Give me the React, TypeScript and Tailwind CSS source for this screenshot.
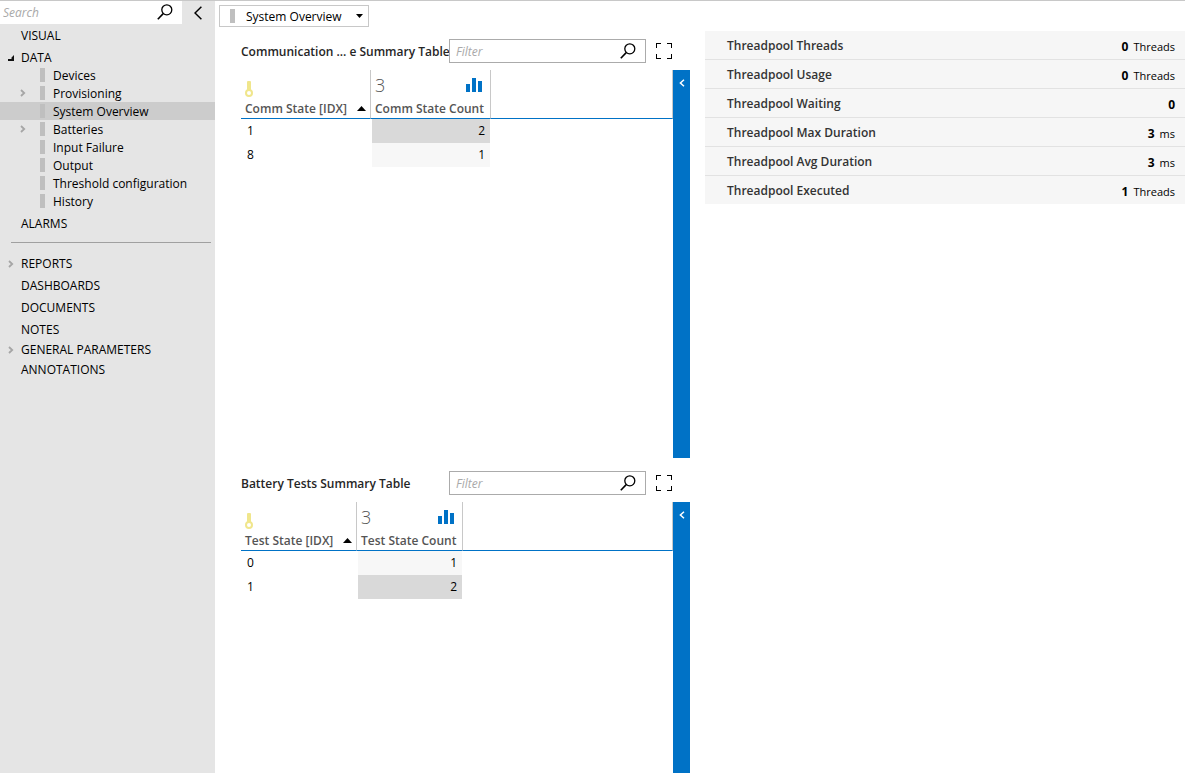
import clsx from "clsx";
import type { ReactElement } from "react";

type NavItem = { label: string; expandable?: boolean; active?: boolean };

const dataPages: NavItem[] = [
    { label: "Devices" },
    { label: "Provisioning", expandable: true },
    { label: "System Overview", active: true },
    { label: "Batteries", expandable: true },
    { label: "Input Failure" },
    { label: "Output" },
    { label: "Threshold configuration" },
    { label: "History" },
];

const threadpool = [
    { name: "Threadpool Threads", value: 0, unit: "Threads" },
    { name: "Threadpool Usage", value: 0, unit: "Threads" },
    { name: "Threadpool Waiting", value: 0, unit: "" },
    { name: "Threadpool Max Duration", value: 3, unit: "ms" },
    { name: "Threadpool Avg Duration", value: 3, unit: "ms" },
    { name: "Threadpool Executed", value: 1, unit: "Threads" },
];

function SearchIcon(): ReactElement {
    return (
        <svg width="16" height="16" viewBox="0 0 16 16" fill="none" stroke="#000" aria-hidden="true">
            <circle cx="9.8" cy="5.8" r="5" strokeWidth="1.3" />
            <path d="M6.2 9.6L0.8 15.2" strokeWidth="1.6" />
        </svg>
    );
}

function Expander(): ReactElement {
    return (
        <svg width="6" height="8" viewBox="0 0 6 8" fill="none" stroke="#a6a6a6" strokeWidth="1.8" aria-hidden="true">
            <path d="M1 1L4.2 4L1 7" />
        </svg>
    );
}

function NavLink({ label, expandable, expanded, className }: { label: string; expandable?: boolean; expanded?: boolean; className: string }): ReactElement {
    return (
        <a href="#" className={clsx("flex items-center", className)}>
            <span className="flex w-[21px] pl-2">
                {expandable && <Expander />}
                {expanded && (
                    <svg width="6" height="6" viewBox="0 0 6 6" aria-hidden="true">
                        <path d="M6 0V6H0V4H3.5V2.5L6 0Z" fill="#111" />
                    </svg>
                )}
            </span>
            {label}
        </a>
    );
}

function Sidebar(): ReactElement {
    return (
        <aside className="w-[215px] shrink-0 bg-[#e5e5e5]">
            <div className="flex h-[23px]">
                <label className="flex flex-1 items-center bg-white pr-[9px] pb-0.5">
                    <input type="text" aria-label="Search" placeholder="Search" className="w-0 flex-1 px-[3px] pt-0.5 italic outline-none placeholder:text-[#a9a9a9]" />
                    <SearchIcon />
                </label>
                <button type="button" aria-label="Collapse sidebar" className="flex w-[33px] items-center justify-center pr-0.5">
                    <svg width="8" height="14" viewBox="0 0 8 14" fill="none" stroke="#000" strokeWidth="1.5">
                        <path d="M7.4 0.8L1 7L7.4 13.2" />
                    </svg>
                </button>
            </div>

            <nav>
                <NavLink label="VISUAL" className="h-[22px] pt-0.5" />
                <NavLink label="DATA" expanded className="h-[22px] pt-0.5" />
                <ul className="-mt-0.5 pb-0.5">
                    {dataPages.map((page) => (
                        <li key={page.label}>
                            <a href="#" className={clsx("flex h-[18px] items-center", page.active && "bg-[#cccccc]")}>
                                <span className="w-10 pl-5">{page.expandable && <Expander />}</span>
                                <span className="mr-2 h-3.5 w-[5px] bg-[#bfbfbf]" />
                                <span className="pt-0.5">{page.label}</span>
                            </a>
                        </li>
                    ))}
                </ul>
                <NavLink label="ALARMS" className="h-[22px] pt-0.5" />
                <hr className="mt-2 mr-1 mb-[9px] ml-[11px] border-[#a0a0a0]" />
                <NavLink label="REPORTS" expandable className="h-[22px] pt-0.5" />
                <NavLink label="DASHBOARDS" className="h-[22px] pt-0.5" />
                <NavLink label="DOCUMENTS" className="h-[22px] pt-0.5" />
                <NavLink label="NOTES" className="h-[22px] pt-0.5" />
                <NavLink label="GENERAL PARAMETERS" expandable className="h-5" />
                <NavLink label="ANNOTATIONS" className="h-5" />
            </nav>
        </aside>
    );
}

type SummaryProps = {
    title: string;
    columns: [string, string];
    widths: [string, string];
    rows: { state: number; count: number; high?: boolean }[];
    className: string;
};

function SummaryTable({ title, columns, widths, rows, className }: SummaryProps): ReactElement {
    return (
        <section className={clsx("flex flex-col gap-[7px]", className)}>
            { /* Title with filter box */ }
            <div className="flex h-6 items-center pr-[18px]">
                <h2 className="w-52 pt-0.5 font-semibold whitespace-nowrap text-[#262626]">{title}</h2>
                <label className="mr-2.5 flex h-6 flex-1 items-center border border-[#ababab] pr-[9px]">
                    <input type="text" aria-label={"Filter " + title} placeholder="Filter" className="w-0 flex-1 px-1.5 pt-0.5 italic outline-none placeholder:text-[#a9a9a9]" />
                    <SearchIcon />
                </label>
                <button type="button" aria-label="Full screen">
                    <svg width="16" height="16" viewBox="0 0 16 16" fill="none" stroke="#000" shapeRendering="crispEdges">
                        <path d="M0.5 5V0.5H5M11 0.5H15.5V5M15.5 11V15.5H11M5 15.5H0.5V11" />
                    </svg>
                </button>
            </div>

            <div className="flex flex-1">
                <div className="flex-1">
                    <table className="w-full table-fixed border-separate border-spacing-0 text-left">
                        <thead>
                            <tr className="h-[49px] align-bottom text-[#555]">
                                <th scope="col" className={clsx("border-r border-b border-r-[#c8c8c8] border-b-[#0072c6] pr-1 pl-1 font-semibold", widths[0])}>
                                    <svg className="mb-[3px]" width="8" height="16" viewBox="0 0 8 16" aria-hidden="true">
                                        <rect x="2" y="0" width="4" height="10" rx="1" fill="#f0e68c" />
                                        <circle cx="4" cy="12" r="3" fill="#fff" stroke="#f0e68c" strokeWidth="2" />
                                    </svg>
                                    <span className="flex h-[18px] items-center justify-between whitespace-nowrap">
                                        {columns[0]}
                                        <svg className="mb-0.5" width="9" height="5" viewBox="0 0 9 5" aria-hidden="true">
                                            <path d="M0 5L4.5 0L9 5Z" fill="#000" />
                                        </svg>
                                    </span>
                                </th>
                                <th scope="col" className={clsx("border-r border-b border-r-[#c8c8c8] border-b-[#0072c6] pl-1 font-semibold", widths[1])}>
                                    <span className="mb-1 flex h-[22px] items-center justify-between pr-2 text-lg font-light">
                                        3
                                        <svg width="16" height="14" viewBox="0 0 16 14" fill="#0072c6" aria-hidden="true">
                                            <path d="M0 6H4V14H0ZM6 0H10V14H6ZM12 3H16V14H12Z" />
                                        </svg>
                                    </span>
                                    <span className="flex h-[18px] items-center whitespace-nowrap">{columns[1]}</span>
                                </th>
                                <td className="border-r border-b border-r-[#c8c8c8] border-b-[#0072c6]" />
                            </tr>
                        </thead>
                        <tbody>
                            {rows.map((row) => (
                                <tr key={row.state} className="h-6">
                                    <td className="pl-1.5">{row.state}</td>
                                    <td className="px-px text-right">
                                        <span className={clsx("block h-6 pr-[5px] leading-6", row.high ? "bg-[#d9d9d9]" : "bg-[#f7f7f7]")}>{row.count}</span>
                                    </td>
                                    <td />
                                </tr>
                            ))}
                        </tbody>
                    </table>
                </div>
                <button type="button" aria-label={"Expand " + title} className="flex w-[17px] justify-center bg-[#0072c6] pt-[9px]">
                    <svg width="6" height="8" viewBox="0 0 6 8" fill="none" stroke="#fff" strokeWidth="1.5">
                        <path d="M5 0.8L1.4 4L5 7.2" />
                    </svg>
                </button>
            </div>
        </section>
    );
}

export default function App(): ReactElement {
    return (
        <div className="flex min-h-screen border-t border-[#c8c8c8] bg-white font-['Open_Sans','Noto_Sans',sans-serif] text-xs text-black">
            <Sidebar />

            <main className="flex flex-1 flex-col">
                <div className="mt-1 ml-1 flex h-[22px] w-[150px] items-center border border-[#c8c8c8] pr-[5px] pl-2.5">
                    <span className="h-3.5 w-[5px] bg-[#bfbfbf]" />
                    <select aria-label="Page" className="flex-1 appearance-none pt-0.5 pl-[11px] outline-none">
                        <option>System Overview</option>
                    </select>
                    <svg width="7" height="4" viewBox="0 0 7 4" aria-hidden="true">
                        <path d="M0 0H7L3.5 4Z" fill="#000" />
                    </svg>
                </div>

                <div className="grid flex-1 grid-cols-2">
                    <div className="flex flex-col gap-[13px] pt-3 pr-2.5 pl-[26px]">
                        <SummaryTable
                            title="Communication … e Summary Table"
                            columns={["Comm State [IDX]", "Comm State Count"]}
                            widths={["w-[130px]", "w-[120px]"]}
                            rows={[{ state: 1, count: 2, high: true }, { state: 8, count: 1 }]}
                            className="min-h-[419px]"
                        />
                        <SummaryTable
                            title="Battery Tests Summary Table"
                            columns={["Test State [IDX]", "Test State Count"]}
                            widths={["w-[116px]", "w-[106px]"]}
                            rows={[{ state: 0, count: 1 }, { state: 1, count: 2, high: true }]}
                            className="flex-1"
                        />
                    </div>

                    { /* Threadpool parameters */ }
                    <dl className="pt-1 pl-[5px]">
                        {threadpool.map((item) => (
                            <div key={item.name} className="flex h-[29px] items-center justify-between border-b border-[#e2e2e2] bg-[#f6f6f6] pt-0.5 pr-2.5 pl-[22px] last:h-7 last:border-b-0">
                                <dt className="font-semibold text-[#333]">{item.name}</dt>
                                <dd className="flex items-baseline gap-[5px] pt-px">
                                    <b className="font-bold">{item.value}</b>
                                    {item.unit && <span className="text-[11px]">{item.unit}</span>}
                                </dd>
                            </div>
                        ))}
                    </dl>
                </div>
            </main>
        </div>
    );
}
